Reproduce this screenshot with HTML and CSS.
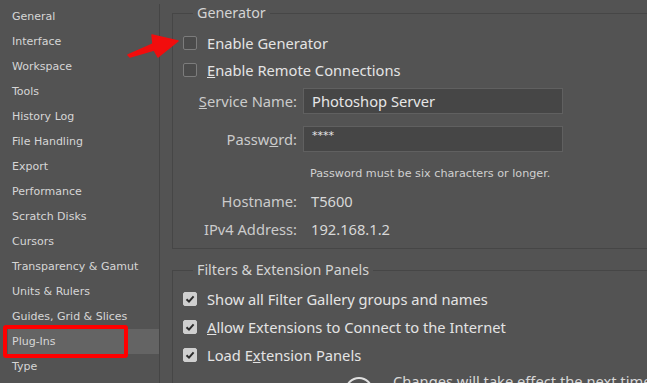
FILE: index.html
```html
<!DOCTYPE html>
<html lang="en">
<head>
    <meta charset="UTF-8">
    <title>Preferences - Plug-Ins</title>
    <link rel="stylesheet" href="styles.css">
</head>
<body>

    <!-- Список разделов настроек -->
    <ul class="sidebar">
        <li>General</li>
        <li>Interface</li>
        <li>Workspace</li>
        <li>Tools</li>
        <li>History Log</li>
        <li>File Handling</li>
        <li>Export</li>
        <li>Performance</li>
        <li>Scratch Disks</li>
        <li>Cursors</li>
        <li>Transparency &amp; Gamut</li>
        <li>Units &amp; Rulers</li>
        <li>Guides, Grid &amp; Slices</li>
        <li class="selected">Plug-Ins<span class="highlight"></span></li>
        <li>Type</li>
    </ul>

    <div class="main">
        <fieldset class="group generator">
            <legend>Generator</legend>
            <label class="check-row"><span class="box"></span>Enable Generator</label>
            <label class="check-row"><span class="box"></span><u>E</u>nable Remote Connections</label>

            <div class="field service">
                <span class="field-label"><u>S</u>ervice Name:</span>
                <span class="input">Photoshop Server</span>
            </div>
            <div class="field password">
                <span class="field-label">Passw<u>o</u>rd:</span>
                <span class="input stars">****</span>
            </div>
            <div class="hint">Password must be six characters or longer.</div>
            <div class="field info host">
                <span class="field-label">Hostname:</span>
                <span class="value">T5600</span>
            </div>
            <div class="field info ip">
                <span class="field-label">IPv4 Address:</span>
                <span class="value">192.168.1.2</span>
            </div>
        </fieldset>

        <fieldset class="group filters">
            <legend>Filters &amp; Extension Panels</legend>
            <label class="check-row checked"><span class="box"><svg viewBox="0 0 14 14" width="14" height="14"><path d="M3.5 7.2 L6 9.6 L10.6 4.4" fill="none" stroke="#2b2b2b" stroke-width="2"/></svg></span>Show all Filter Gallery groups and names</label>
            <label class="check-row checked"><span class="box"><svg viewBox="0 0 14 14" width="14" height="14"><path d="M3.5 7.2 L6 9.6 L10.6 4.4" fill="none" stroke="#2b2b2b" stroke-width="2"/></svg></span><u>A</u>llow Extensions to Connect to the Internet</label>
            <label class="check-row checked"><span class="box"><svg viewBox="0 0 14 14" width="14" height="14"><path d="M3.5 7.2 L6 9.6 L10.6 4.4" fill="none" stroke="#2b2b2b" stroke-width="2"/></svg></span>Load E<u>x</u>tension Panels</label>

            <div class="note">
                <span class="note-icon"></span>
                <span>Changes will take effect the next time you start Photoshop.</span>
            </div>
        </fieldset>
    </div>

    <!-- Красная стрелка-указатель -->
    <svg class="arrow" width="60" height="34" viewBox="0 0 60 34">
        <path d="M3 24 L28 13 L27 4 L53 10 L33 26 L29 19 L5 26 Z" fill="#f20d0d" stroke="#f20d0d" stroke-width="1.5" stroke-linejoin="round"/>
    </svg>

</body>
</html>
```

FILE: styles.css
```css
body {
    margin: 0;
    padding: 0;
    background: #535353;
    color: #dcdcdc;
    font-family: 'Noto Sans', sans-serif;
    font-size: 14.7px;
    display: flex;
    align-items: flex-start;
    height: 383px;
    overflow: hidden;
    position: relative;
}

/* Боковая панель */
.sidebar {
    list-style: none;
    margin: 4px 0 0 8px;
    padding: 0;
    width: 151px;
    height: 400px;
    border-right: 1px solid #454545;
    font-family: 'DejaVu Sans', sans-serif;
    font-size: 11px;
    color: #d6d6d6;
    flex-shrink: 0;
}

.sidebar li {
    height: 25px;
    line-height: 25px;
    padding-left: 4px;
    position: relative;
}

.sidebar li.selected {
    background: #646464;
}

.highlight {
    position: absolute;
    left: -5px;
    top: -4px;
    width: 117px;
    height: 25px;
    border: 4px solid #ff0000;
    border-radius: 3px;
}

/* Правая часть */
.main {
    margin-left: 12px;
    flex: 1;
    min-width: 0;
}

.group {
    border: 1px solid #464646;
    margin: 4px -30px 0 0;
    padding: 0 0 0 10px;
}

.group legend {
    margin-left: 10px;
    padding: 0 4px;
    line-height: 18px;
    font-size: 14.3px;
    color: #d4d4d4;
}

.generator {
    height: 236px;
    padding-top: 7px;
}

.filters {
    margin-top: 12px;
    padding-top: 6px;
    height: 120px;
}

.check-row {
    display: flex;
    align-items: center;
    height: 27px;
    color: #e4e4e4;
}

.filters .check-row {
    height: 28px;
}

.box {
    width: 12px;
    height: 12px;
    border: 1px solid #7c7c7c;
    border-radius: 2px;
    background: #4b4b4b;
    margin-right: 10px;
    display: flex;
}

.checked .box {
    background: #cfcfcf;
    border-color: #cfcfcf;
}

.checked .box svg {
    margin: -1px;
}

.field {
    display: flex;
    align-items: center;
}

.field-label {
    width: 114px;
    text-align: right;
    color: #cbcbcb;
    margin-right: 6px;
}

.input {
    width: 250px;
    height: 24px;
    line-height: 24px;
    padding-left: 8px;
    background: #464646;
    border: 1px solid #606060;
    color: #e6e6e6;
}

.service {
    margin-top: 5px;
}

.password {
    margin-top: 12px;
}

.stars {
    line-height: 18px;
    font-family: 'DejaVu Sans', sans-serif;
    font-size: 11px;
}

.hint {
    margin: 14px 0 0 127px;
    line-height: 16px;
    font-family: 'DejaVu Sans', sans-serif;
    font-size: 11.2px;
    color: #d0d0d0;
}

.info {
    height: 20px;
}

.host {
    margin-top: 9px;
}

.ip {
    margin-top: 8px;
}

.value {
    padding-left: 8px;
    color: #d8d8d8;
}

.note {
    display: flex;
    align-items: flex-start;
    margin: 2px 0 0 162px;
    white-space: nowrap;
    color: #d8d8d8;
}

.note-icon {
    width: 24px;
    height: 24px;
    border: 2px solid #e0e0e0;
    border-radius: 50%;
    margin: 6px 20px 0 0;
    flex-shrink: 0;
}

.arrow {
    position: absolute;
    left: 125px;
    top: 31px;
}
```
